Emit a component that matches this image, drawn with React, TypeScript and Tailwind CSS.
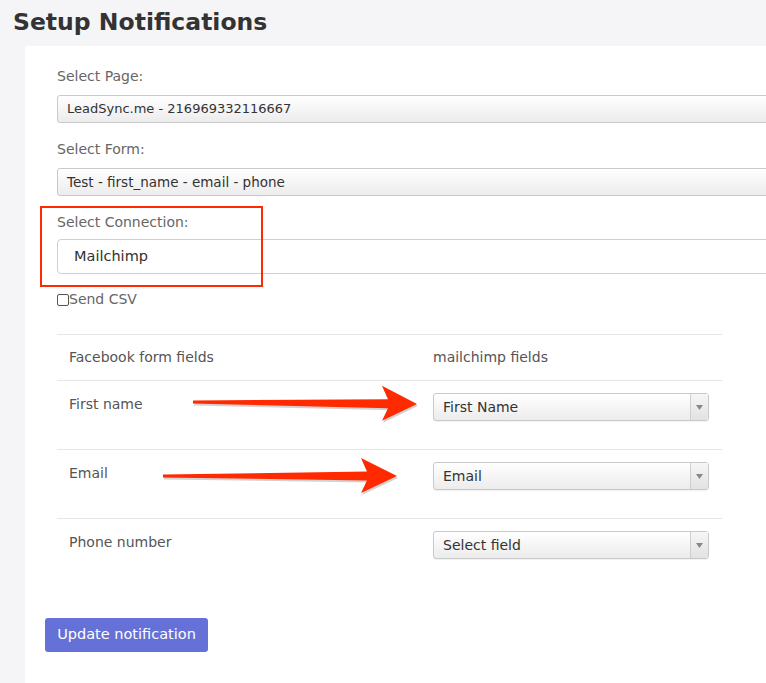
import React from 'react';

const font = { fontFamily: '"DejaVu Sans", "Noto Sans", sans-serif' };

// mapping rows shown in the fields table
const fieldRows = [
  { label: 'First name', value: 'First Name' },
  { label: 'Email', value: 'Email' },
  { label: 'Phone number', value: 'Select field' },
];

const GradientSelect = ({ value, size = 'text-[13.5px]' }: { value: string; size?: string }) => (
  <div className={`h-[28px] w-full flex items-center rounded-[3px] border border-[#c9c9c9] bg-gradient-to-b from-white to-[#ececec] pl-[9px] text-[#333] ${size}`}>
    {value}
  </div>
);

const FieldSelect = ({ value }: { value: string }) => (
  <div className="h-[28px] w-[276px] flex rounded-[3px] border border-[#c9c9c9] bg-gradient-to-b from-white to-[#ececec] text-[14px] text-[#333] shadow-[0_1px_1px_rgba(0,0,0,0.06)]">
    <span className="flex-1 flex items-center pl-[9px]">{value}</span>
    <span className="w-[18px] flex items-center justify-center border-l border-[#cfcfcf] bg-gradient-to-b from-[#f6f6f6] to-[#e2e2e2]">
      <svg width="7" height="5" viewBox="0 0 7 5">
        <path d="M0 0h7L3.5 5z" fill="#888" />
      </svg>
    </span>
  </div>
);

// red call-out arrow, tail -> tip
const Arrow = ({ tx, ty, px, py, hx }: { tx: number; ty: number; px: number; py: number; hx: number }) => {
  const slope = (py - ty) / (px - tx);
  const hy = ty + slope * (hx - tx);
  const d = [
    `M${tx} ${ty - 1.5}`,
    `L${hx + 4} ${hy - 4.5}`,
    `L${hx - 2} ${hy - 18}`,
    `L${px} ${py}`,
    `L${hx - 2} ${hy + 17}`,
    `L${hx + 4} ${hy + 4.5}`,
    `L${tx} ${ty + 1.5}`,
    'Z',
  ].join(' ');
  return (
    <>
      <path d={d} fill="rgba(0,0,0,0.18)" transform="translate(1 2)" />
      <path d={d} fill="#ff2a00" />
    </>
  );
};

export default function App() {
  return (
    <div className="relative min-h-screen overflow-hidden bg-[#f5f5f7]" style={font}>
      <h1 className="pl-[13px] pt-[7px] h-[46px] text-[23.5px] leading-[30px] font-bold text-[#333]">
        Setup Notifications
      </h1>

      <div className="ml-[25px] w-[800px] bg-white pl-[20px] pt-[20px] pb-[40px]">
        <div className="pl-[12px]">
          <label className="block text-[14px] text-[#666] mb-[8px]">Select Page:</label>
          <GradientSelect value="LeadSync.me - 216969332116667" size="text-[13px]" />

          <label className="block text-[14px] text-[#666] mt-[16px] mb-[8px]">Select Form:</label>
          <GradientSelect value="Test - first_name - email - phone" />

          <label className="block text-[14px] text-[#666] mt-[16px] mb-[6px]">Select Connection:</label>
          <div className="h-[35px] flex items-center rounded-[4px] border border-[#d0d0d0] bg-white pl-[16px] text-[14.5px] text-[#333]">
            Mailchimp
          </div>

          <label className="flex items-center mt-[15px] text-[14px] text-[#666]">
            <span className="w-[12px] h-[12px] rounded-[2px] border border-[#555] bg-white" />
            Send CSV
          </label>
        </div>

        <div className="ml-[12px] w-[665px] mt-[24px] text-[14px] text-[#555]">
          <div className="flex h-[47px] items-center border-t border-b border-[#e6e6e6]">
            <span className="w-[364px] pl-[12px]">Facebook form fields</span>
            <span className="pl-[12px]">mailchimp fields</span>
          </div>
          {fieldRows.map((row, i) => (
            <div
              key={row.label}
              className={`flex h-[69px] ${i < fieldRows.length - 1 ? 'border-b border-[#e6e6e6]' : ''}`}
            >
              <span className="w-[364px] pl-[12px] pt-[13px]">{row.label}</span>
              <div className="pl-[12px] pt-[12px]">
                <FieldSelect value={row.value} />
              </div>
            </div>
          ))}
        </div>

        <button className="mt-[30px] h-[34px] w-[163px] rounded-[3px] bg-[#6571d6] text-[14.5px] text-white">
          Update notification
        </button>
      </div>

      {/* highlight box and arrows drawn over the form */}
      <div className="absolute left-[40px] top-[206px] w-[223px] h-[81px] border-[2px] border-[#ff2a00] pointer-events-none" />
      <svg className="absolute inset-0 pointer-events-none" width="766" height="683">
        <Arrow tx={193} ty={402} px={417} py={404} hx={384} />
        <Arrow tx={163} ty={476} px={397} py={476} hx={363} />
      </svg>
    </div>
  );
}
